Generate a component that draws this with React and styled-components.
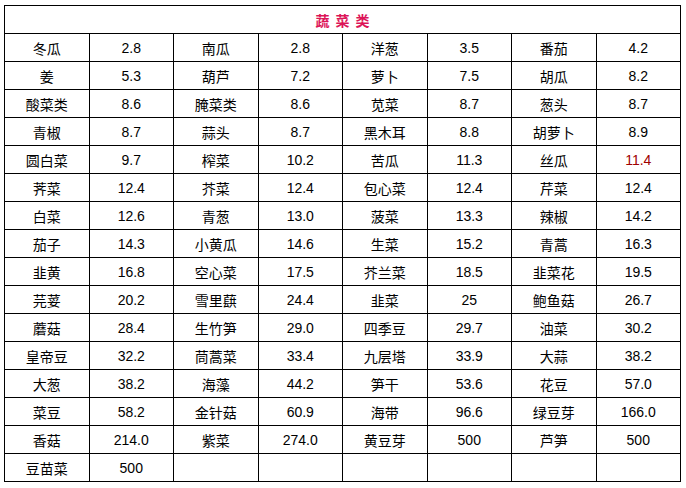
import React from 'react';
import styled, { createGlobalStyle } from 'styled-components';

const GlobalStyle = createGlobalStyle`
    body {
        margin:0;
        background:#fff;
        font-family:"Liberation Sans", "Noto Sans CJK SC", sans-serif;
    }
`

const Page = styled.div`
    padding:5px 4px;
`

const Table = styled.table`
    width:677px;
    table-layout:fixed;
    border-collapse:collapse;
    border:1px solid #000;
`

const Title = styled.th`
    height:27px;
    border:1px solid #000;
    color:#dc1458;
    font-size:14px;
    font-weight:bold;
    letter-spacing:6px;
    text-indent:6px;
    text-align:center;
    padding:0;
`

const Cell = styled.td`
    height:27px;
    border:1px solid #000;
    padding:0;
    text-align:center;
    font-size:14px;
    color:${p => p.$red ? '#a00000' : '#000'};
`

const data = [
    ['冬瓜','2.8','南瓜','2.8','洋葱','3.5','番茄','4.2'],
    ['姜','5.3','葫芦','7.2','萝卜','7.5','胡瓜','8.2'],
    ['酸菜类','8.6','腌菜类','8.6','苋菜','8.7','葱头','8.7'],
    ['青椒','8.7','蒜头','8.7','黑木耳','8.8','胡萝卜','8.9'],
    ['圆白菜','9.7','榨菜','10.2','苦瓜','11.3','丝瓜','11.4'],
    ['荠菜','12.4','芥菜','12.4','包心菜','12.4','芹菜','12.4'],
    ['白菜','12.6','青葱','13.0','菠菜','13.3','辣椒','14.2'],
    ['茄子','14.3','小黄瓜','14.6','生菜','15.2','青蒿','16.3'],
    ['韭黄','16.8','空心菜','17.5','芥兰菜','18.5','韭菜花','19.5'],
    ['芫荽','20.2','雪里蕻','24.4','韭菜','25','鲍鱼菇','26.7'],
    ['蘑菇','28.4','生竹笋','29.0','四季豆','29.7','油菜','30.2'],
    ['皇帝豆','32.2','茼蒿菜','33.4','九层塔','33.9','大蒜','38.2'],
    ['大葱','38.2','海藻','44.2','笋干','53.6','花豆','57.0'],
    ['菜豆','58.2','金针菇','60.9','海带','96.6','绿豆芽','166.0'],
    ['香菇','214.0','紫菜','274.0','黄豆芽','500','芦笋','500'],
    ['豆苗菜','500','','','','','',''],
]

function App(){
    return (
        <Page>
            <GlobalStyle />
            <Table>
                <thead>
                    <tr><Title colSpan={8}>蔬菜类</Title></tr>
                </thead>
                <tbody>
                    {data.map((row, i) => (
                        <tr key={i}>
                            {row.map((v, j) => (
                                <Cell key={j} $red={i === 4 && j === 7}>{v}</Cell>
                            ))}
                        </tr>
                    ))}
                </tbody>
            </Table>
        </Page>
    )
}

export default App
